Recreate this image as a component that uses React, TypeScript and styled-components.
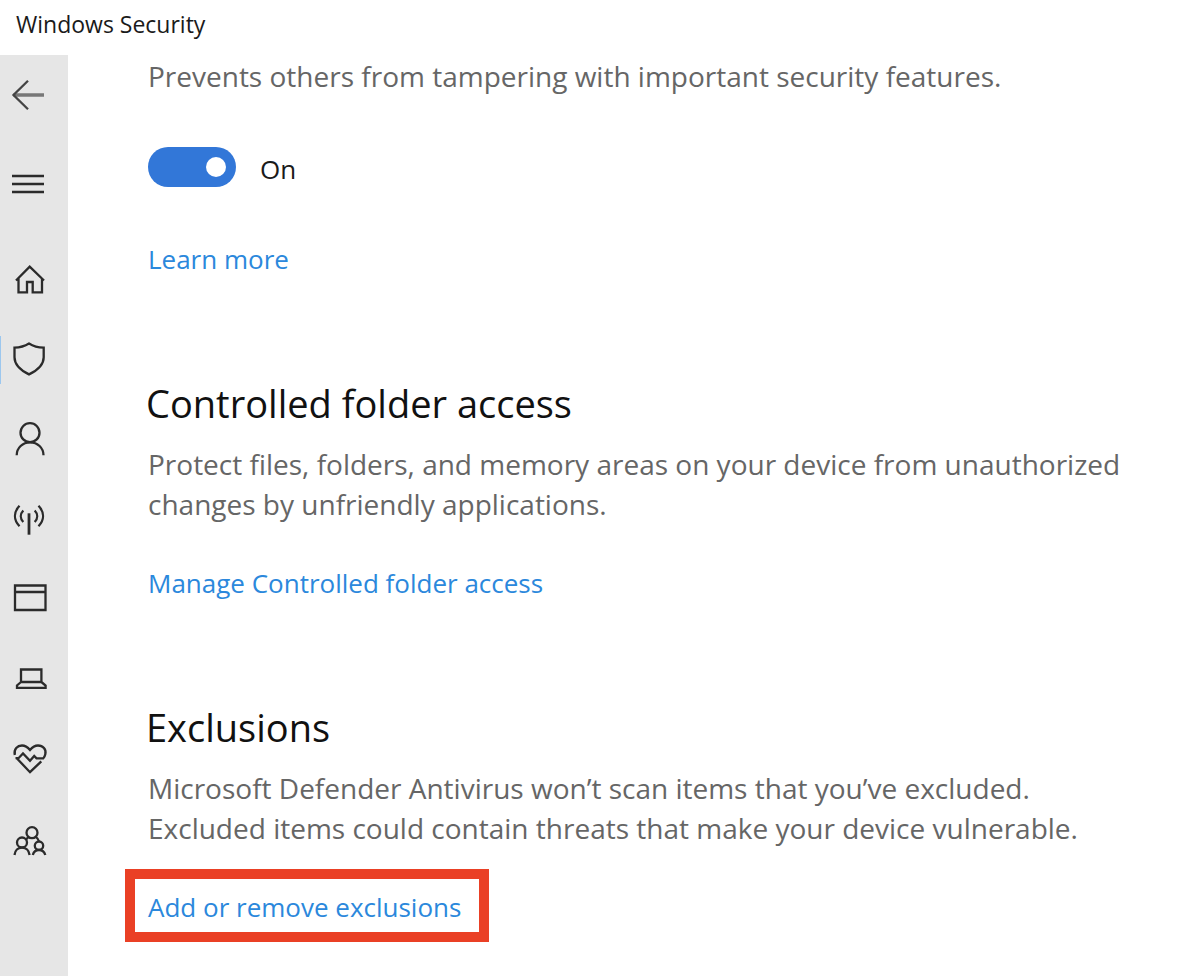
import React from "react";
import styled, { createGlobalStyle } from "styled-components";

const GlobalStyle = createGlobalStyle`
  *, *::before, *::after { box-sizing: border-box; }
  body {
    margin: 0;
    background: #fff;
    color: #1a1a1a;
    font-family: "Segoe UI", "Open Sans", "Noto Sans", sans-serif;
  }
`;

const Window = styled.div`
  display: flex;
  flex-direction: column;
  min-height: 100vh;
`;

const TitleBar = styled.header`
  height: 55px;
  padding: 8px 16px 0;
  font-size: 23px;
  line-height: 32px;
`;

const Body = styled.div`
  display: flex;
  flex: 1;
`;

const Sidebar = styled.nav`
  display: flex;
  flex-direction: column;
  flex: none;
  width: 68px;
  background: #e6e6e6;
`;

const TopButtons = styled.div`
  display: flex;
  flex-direction: column;
  gap: 9px;
  margin-bottom: 16px;
`;

const NavButton = styled.button<{ $selected?: boolean }>`
  display: flex;
  align-items: center;
  height: 80px;
  padding: 0 0 0 10px;
  border: 0;
  background: ${(p) =>
    p.$selected
      ? "linear-gradient(#9cc7ee, #9cc7ee) left 16px / 1px 48px no-repeat"
      : "none"};
  cursor: pointer;
`;

const Icon = styled.svg`
  width: 40px;
  height: 40px;
  fill: none;
  stroke: #2b2b2b;
  stroke-width: 2.3;
`;

const Main = styled.main`
  flex: 1;
  min-width: 0;
  padding: 1px 40px 32px 80px;
`;

const Section = styled.section`
  margin-bottom: 100px;

  &:last-child {
    margin-bottom: 0;
  }
`;

const Heading = styled.h2`
  margin: 0 0 17px -2px;
  font-size: 38px;
  line-height: 48px;
  font-weight: 400;
  color: #111;
`;

const Text = styled.p`
  margin: 0;
  font-size: 28px;
  line-height: 40px;
  color: #666;
`;

const ToggleRow = styled.label`
  display: flex;
  align-items: center;
  gap: 24px;
  width: max-content;
  height: 40px;
  margin: 51px 0 52px;
  font-size: 26px;
  line-height: 40px;
`;

const ToggleText = styled.span`
  padding-top: 4px;
`;

const Toggle = styled.input`
  appearance: none;
  display: flex;
  align-items: center;
  justify-content: flex-start;
  width: 88px;
  height: 40px;
  margin: 0;
  padding: 0 10px;
  border-radius: 20px;
  background: #767676;
  cursor: pointer;

  &::before {
    content: "";
    width: 20px;
    height: 20px;
    border-radius: 50%;
    background: #fff;
  }

  &:checked {
    justify-content: flex-end;
    background: #3277d8;
  }
`;

const Link = styled.a`
  display: block;
  width: max-content;
  font-size: 26px;
  line-height: 40px;
  font-weight: 500;
  color: #2b88dc;
  text-decoration: none;
`;

const LinkRow = styled.div`
  margin-top: 39px;
`;

const Highlight = styled.div`
  width: max-content;
  margin: 21px 0 0 -23px;
  padding: 8px 18px 5px 13px;
  border: 10px solid #ea4025;
`;

const navItems = [
  {
    label: "Home",
    art: <path d="M6 20.500 19.700 6.700 34 20.500M8.500 18.500v13.800h8.500V22h5.700v10.300H32V18.500" />,
  },
  {
    label: "Virus & threat protection",
    selected: true,
    art: <path d="M4.500 7.700C10 7.500 15 6 19 3.500c4 2.500 9 4 14.700 4.200v9.500c0 7-5 12.500-14.700 17.200C9.500 29.700 4.500 24.200 4.500 17.200z" />,
  },
  {
    label: "Account protection",
    art: (
      <>
        <circle cx="20" cy="12.700" r="9.500" />
        <path d="M6.700 35.300c0-7.500 6-13 13.400-13s13.400 5.500 13.400 13" />
      </>
    ),
  },
  {
    label: "Firewall & network protection",
    art: (
      <>
        <path d="M13.300 10.500c-3.300 3.500-3.300 8 0 11.500M24.700 10.500c3.300 3.500 3.300 8 0 11.500M9.500 5.700c-6 6.500-6 14.200 0 20.600M28.500 5.700c6 6.500 6 14.200 0 20.600" />
        <path d="M19 13.300v21.400" strokeWidth="2.800" />
      </>
    ),
  },
  {
    label: "App & browser control",
    art: <path d="M5 5.500h30.500V30H5zM5 12h30.500" />,
  },
  {
    label: "Device security",
    art: <path d="M11 9.500h20.400V22H11zM11 22l-4 3.500v2.300h28.600v-2.300L31.400 22" />,
  },
  {
    label: "Device performance & health",
    art: (
      <>
        <path d="M4.800 15C3.500 9 7.500 5.500 12 5.500c3 0 5.500 1.500 8 4.500 2.500-3 5-4.500 8-4.500 5 0 8.500 4 7.300 8.800-.4 1.800-1 3-2 4H26.500L24.200 16 20 20.700 13 13.500l-4.500 4.700H5.500" />
        <path d="M7 18.500 20 32.200 31.300 21.300" />
      </>
    ),
  },
  {
    label: "Family options",
    art: (
      <>
        <circle cx="22" cy="12.700" r="5.500" />
        <circle cx="12" cy="22.500" r="5" />
        <circle cx="29" cy="25.700" r="4.200" />
        <path d="M4.500 35c.5-4.500 3.500-7.400 7.500-7.400s7 2.900 7.600 7.400M22.800 35c.8-3 3.200-5 6.200-5s5.400 2 6.300 5M18.500 17l-2.500 2.500M25.800 16.800c1.600 1.200 2.700 2.500 3.200 4.700" />
      </>
    ),
  },
];

export default function App() {
  return (
    <>
      <GlobalStyle />
      <Window>
        <TitleBar>Windows Security</TitleBar>
        <Body>
          <Sidebar aria-label="Windows Security">
            <TopButtons>
              <NavButton type="button" aria-label="Back">
                <Icon viewBox="0 0 40 40">
                  <path d="M3.500 20H34" stroke="#777" strokeWidth="3.500" />
                  <path d="M18 5.800 3.500 20 18 34.200" stroke="#444" />
                </Icon>
              </NavButton>
              <NavButton type="button" aria-label="Menu">
                <Icon viewBox="0 0 40 40">
                  <path d="M2 12h32M2 20h32M2 28h32" />
                </Icon>
              </NavButton>
            </TopButtons>
            {navItems.map((item) => (
              <NavButton
                key={item.label}
                type="button"
                aria-label={item.label}
                $selected={item.selected}
              >
                <Icon viewBox="0 0 40 40">{item.art}</Icon>
              </NavButton>
            ))}
          </Sidebar>
          <Main>
            <Section>
              <Text>Prevents others from tampering with important security features.</Text>
              <ToggleRow>
                <Toggle type="checkbox" role="switch" defaultChecked />
                <ToggleText>On</ToggleText>
              </ToggleRow>
              <Link href="#learn-more">Learn more</Link>
            </Section>
            <Section>
              <Heading>Controlled folder access</Heading>
              <Text>
                Protect files, folders, and memory areas on your device from unauthorized
                <br />
                changes by unfriendly applications.
              </Text>
              <LinkRow>
                <Link href="#folder-access">Manage Controlled folder access</Link>
              </LinkRow>
            </Section>
            <Section>
              <Heading>Exclusions</Heading>
              <Text>
                Microsoft Defender Antivirus won’t scan items that you’ve excluded.
                <br />
                Excluded items could contain threats that make your device vulnerable.
              </Text>
              <Highlight>
                <Link href="#exclusions">Add or remove exclusions</Link>
              </Highlight>
            </Section>
          </Main>
        </Body>
      </Window>
    </>
  );
}
